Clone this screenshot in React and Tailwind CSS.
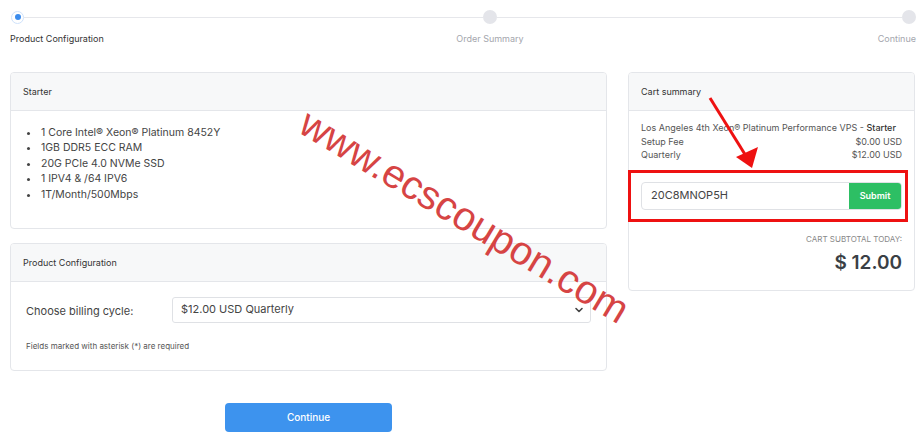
import React from "react";

export default function App() {
  return (
    <div className="relative w-[923px] h-[437px] overflow-hidden bg-white text-[#333] font-['Inter',sans-serif]">
      {/* Stepper */}
      <div className="pt-[10px]">
        <div className="flex items-center pl-[11px]">
          <div className="w-[13px] h-[13px] rounded-full border border-[#cfe2fb] bg-white flex items-center justify-center shrink-0">
            <div className="w-[6px] h-[6px] rounded-full bg-[#3b8ced]" />
          </div>
          <div className="w-[459px] h-px bg-[#e6e7eb]" />
          <div className="w-[14px] h-[14px] rounded-full bg-[#e4e5ea] shrink-0" />
          <div className="w-[405px] h-px bg-[#e6e7eb]" />
          <div className="w-[14px] h-[14px] rounded-full bg-[#e4e5ea] shrink-0" />
        </div>
        <div className="flex mt-[9px] text-[9px] leading-[12px]">
          <div className="w-[380px] pl-[10px] text-[#333]">Product Configuration</div>
          <div className="w-[220px] text-center text-[#a4a6ad]">Order Summary</div>
          <div className="flex-1 text-right pr-[7px] text-[#a4a6ad]">Continue</div>
        </div>
      </div>

      {/* Main */}
      <div className="flex pl-[10px] pr-[8px] pt-[27px] gap-[21px]">
        <div className="w-[597px] shrink-0 flex flex-col">
          {/* Starter card */}
          <div className="h-[157px] border border-[#e4e6ea] rounded-[4px] overflow-hidden">
            <div className="h-[38px] bg-[#f7f8f9] border-b border-[#e4e6ea] flex items-center px-[12px] text-[9px] text-[#333]">
              Starter
            </div>
            <ul className="pt-[14px] pl-[29px] text-[10.5px] leading-[15.4px] text-[#444] list-disc marker:text-[#444]">
              <li className="pl-[1px]">1 Core Intel® Xeon® Platinum 8452Y</li>
              <li className="pl-[1px]">1GB DDR5 ECC RAM</li>
              <li className="pl-[1px]">20G PCIe 4.0 NVMe SSD</li>
              <li className="pl-[1px]">1 IPV4 &amp; /64 IPV6</li>
              <li className="pl-[1px]">1T/Month/500Mbps</li>
            </ul>
          </div>

          {/* Product configuration card */}
          <div className="mt-[14px] h-[128px] border border-[#e4e6ea] rounded-[4px] overflow-hidden">
            <div className="h-[38px] bg-[#f7f8f9] border-b border-[#e4e6ea] flex items-center px-[12px] text-[9px] text-[#333]">
              Product Configuration
            </div>
            <div className="px-[15px] pt-[15px]">
              <div className="flex items-center">
                <div className="w-[146px] text-[11px] text-[#444] pt-[2px]">Choose billing cycle:</div>
                <div className="w-[419px] h-[26px] border border-[#dfe1e5] rounded-[3px] flex items-center justify-between pl-[8px] pr-[6px] text-[11px] text-[#444]">
                  <span className="-mt-[2px]">$12.00 USD Quarterly</span>
                  <svg width="10" height="10" viewBox="0 0 10 10" className="text-[#444]">
                    <path d="M2 3.5 L5 6.5 L8 3.5" fill="none" stroke="currentColor" strokeWidth="1.6" strokeLinecap="round" strokeLinejoin="round" />
                  </svg>
                </div>
              </div>
              <div className="mt-[17px] text-[8px] text-[#555]">Fields marked with asterisk (*) are required</div>
            </div>
          </div>

          <div className="mt-[32px] pl-[215px]">
            <button className="w-[167px] h-[29px] rounded-[4px] bg-[#3d93ee] text-white text-[10px] font-medium">
              Continue
            </button>
          </div>
        </div>

        {/* Cart summary */}
        <div className="w-[287px] shrink-0">
          <div className="h-[219px] border border-[#e4e6ea] rounded-[4px] overflow-hidden">
            <div className="h-[38px] bg-[#f7f8f9] border-b border-[#e4e6ea] flex items-center px-[12px] text-[9px] text-[#333]">
              Cart summary
            </div>
            <div className="px-[12px] pt-[10px] text-[9px] leading-[13.5px] text-[#555]">
              <div>
                Los Angeles 4th Xeon® Platinum Performance VPS - <span className="text-[#333] font-medium">Starter</span>
              </div>
              <div className="flex justify-between">
                <span>Setup Fee</span>
                <span>$0.00 USD</span>
              </div>
              <div className="flex justify-between">
                <span>Quarterly</span>
                <span>$12.00 USD</span>
              </div>
              <div className="mt-[20px] flex h-[28px] border border-[#dfe1e5] rounded-[4px] overflow-hidden">
                <div className="flex-1 flex items-center pl-[9px] text-[11px] text-[#444]">20C8MNOP5H</div>
                <div className="w-[52px] bg-[#2dbf64] text-white text-[9px] font-semibold flex items-center justify-center">
                  Submit
                </div>
              </div>
              <div className="mt-[23px] text-right text-[8px] text-[#888] uppercase">Cart subtotal today:</div>
              <div className="mt-[5px] text-right text-[19px] leading-[24px] font-semibold text-[#3a3f45]">$ 12.00</div>
            </div>
          </div>
        </div>
      </div>

      {/* Annotation: red box */}
      <div className="absolute left-[628px] top-[170px] w-[280px] h-[52px] border-[3px] border-[#ee1111]" />

      {/* Annotation: arrow */}
      <svg className="absolute left-0 top-0 pointer-events-none" width="923" height="437">
        <line x1="710" y1="98" x2="746" y2="156" stroke="#ee1111" strokeWidth="3" />
        <polygon points="752,168 736,157 758,147" fill="#ee1111" />
      </svg>

      {/* Watermark */}
      <div
        className="absolute left-[314px] top-[102px] origin-top-left rotate-[31deg] text-[40px] leading-[40px] text-[#d64444] font-['Liberation_Sans',sans-serif] whitespace-nowrap"
      >
        www.ecscoupon.com
      </div>
    </div>
  );
}
